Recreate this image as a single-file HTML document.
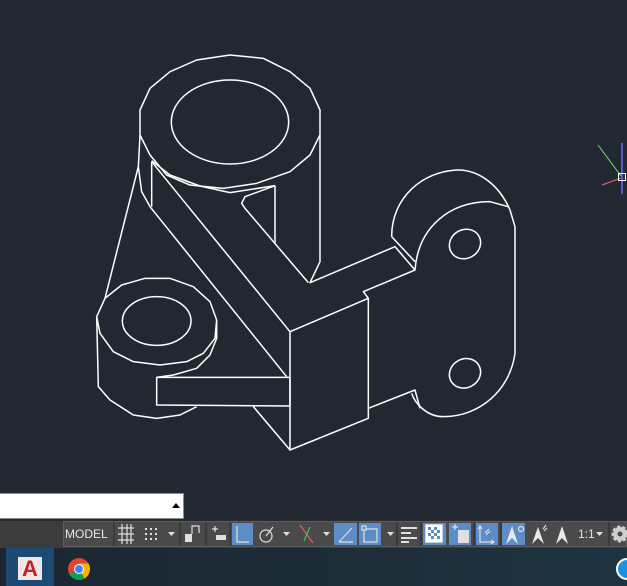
<!DOCTYPE html>
<html><head><meta charset="utf-8"><style>
*{margin:0;padding:0;box-sizing:border-box}
body{width:627px;height:586px;overflow:hidden;background:#222831;position:relative;font-family:"Liberation Sans",sans-serif}
.abs{position:absolute}
#cmd{left:0;top:493px;width:184px;height:26px;background:#fff;border:1px solid #8a8a8a;border-left:none}
#bar{left:0;top:520px;width:627px;height:28px;background:#3c3c3c;border-top:1px solid #2a2a2a}
#grp{left:63px;top:521px;width:564px;height:26px;background:#4a4a4a;border:1px solid #5c5c5c}
.b{position:absolute;top:523px;height:22px}
.bl{background:#5d8dc6}
.sep{position:absolute;top:522px;width:2px;height:24px;background:#3a3a3a}
#task{left:0;top:548px;width:627px;height:38px;background:linear-gradient(90deg,#1b2630,#1d2f3a 70%,#1e3440)}
</style></head><body>
<svg class="abs" style="left:0;top:0" width="627" height="520">
<g transform="translate(90 40) scale(0.33333)" fill="none" stroke="#fff" stroke-width="4.5" stroke-linejoin="round">
<path d="M150,285 L150,210 L180,145 L240,95 L320,60 L420,45 L520,55 L600,95 L660,145 L690,210 L690,285 L660,345 L600,395 L500,430 L400,445 L300,435 L230,405 L180,345 L150,285"/>
<ellipse cx="420" cy="246" rx="176" ry="126"/>
<path d="M185,362 L240,405 L330,438 L420,458 L555,437"/>
<path d="M150,285 L145,380 L45,775"/>
<path d="M145,380 L155,455 L180,500 L590,1010"/>
<path d="M185,365 L185,500"/>
<path d="M185,365 L600,875"/>
<path d="M555,437 L555,610"/>
<path d="M555,437 L465,470 L455,490 L465,505 L655,728"/>
<path d="M690,285 L690,665 L660,728 L915,620 L975,690 L820,755 L835,775"/>
<path d="M905,590 L975,665"/>
<path d="M600,875 L835,775 L835,1135 L600,1230 L600,875"/>
<path d="M490,1100 L600,1230"/>
<path d="M905,590 C905,470 1000,395 1100,390 C1170,388 1230,440 1260,510 L1275,560 L1275,940 C1260,1050 1170,1130 1060,1130 C1010,1130 975,1090 965,1060"/>
<path d="M975,690 C985,560 1080,485 1200,485 L1255,500"/>
<path d="M835,1105 L975,1050 L990,1105"/>
<ellipse cx="1125" cy="612" rx="48" ry="43" transform="rotate(-30 1125 612)"/>
<ellipse cx="1125" cy="1000" rx="48" ry="43" transform="rotate(-30 1125 1000)"/>
<path d="M20,830 L45,775 L95,735 L165,715 L240,715 L310,740 L360,785 L380,840 L375,895 L340,940 L290,965 L210,975 L130,965 L70,935 L30,880 L20,830 L25,1040 L60,1080 L130,1125 L200,1135 L270,1125 L320,1100"/>
<path d="M380,840 L380,895 L360,945 L320,985 L250,1005 L200,1012"/>
<ellipse cx="200" cy="843" rx="103" ry="73"/>
<path d="M200,1012 L600,1012 L600,1098 L200,1095 Z"/>
</g>
<line x1="598" y1="145" x2="621" y2="176" stroke="#7fe06a" stroke-width="1"/>
<line x1="602" y1="185" x2="621" y2="178" stroke="#e07070" stroke-width="1"/>
<line x1="622" y1="143" x2="622" y2="194" stroke="#6b6bff" stroke-width="1.5"/>
<rect x="618.5" y="173.5" width="7" height="7" fill="none" stroke="#fff"/>
</svg>
<div id="cmd" class="abs"><svg class="abs" style="left:172px;top:9px" width="8" height="6"><path d="M0,5 L4,0 L8,5Z" fill="#000"/></svg></div>
<div id="bar" class="abs"></div>
<div id="grp" class="abs"></div>
<div class="abs" style="left:65px;top:527px;font-size:12px;color:#e8e8e8">MODEL</div>
<div class="b bl" style="left:232px;width:21px"></div>
<div class="b bl" style="left:334px;width:23px"></div>
<div class="b bl" style="left:359px;width:22px"></div>
<div class="b bl" style="left:423px;width:23px"></div>
<div class="b bl" style="left:449px;width:22px"></div>
<div class="b bl" style="left:476px;width:22px"></div>
<div class="b bl" style="left:502px;width:23px"></div>
<div class="sep" style="left:113px"></div><div class="sep" style="left:179px"></div><div class="sep" style="left:205px"></div><div class="sep" style="left:229px"></div><div class="sep" style="left:396px"></div><div class="sep" style="left:420px"></div><div class="sep" style="left:473px"></div><div class="sep" style="left:500px"></div><div class="sep" style="left:608px"></div>
<svg class="abs" style="left:0;top:520px" width="627" height="28" fill="none" stroke="#e0e0e0" stroke-width="1.2">
<path d="M118,8 H134 M118,14 H134 M118,20 H134 M122,4 V24 M127,4 V24 M131,4 V24"/>
<g fill="#e0e0e0" stroke="none"><rect x="145" y="8" width="2" height="2"/><rect x="150" y="8" width="2" height="2"/><rect x="155" y="8" width="2" height="2"/><rect x="145" y="13" width="2" height="2"/><rect x="150" y="13" width="2" height="2"/><rect x="155" y="13" width="2" height="2"/><rect x="145" y="18" width="2" height="2"/><rect x="150" y="18" width="2" height="2"/><rect x="155" y="18" width="2" height="2"/>
<path d="M168,12 h7 l-3.5,4z M283,12 h7 l-3.5,4z M323,12 h7 l-3.5,4z M387,12 h7 l-3.5,4z M596,12 h7 l-3.5,4z"/>
<rect x="185" y="14" width="7" height="8"/><rect x="216" y="15" width="10" height="5"/>
<rect x="401" y="7" width="16" height="2"/><rect x="401" y="12" width="10" height="2"/><rect x="401" y="17" width="16" height="2"/><rect x="401" y="21" width="8" height="2"/>
<rect x="458" y="10" width="11" height="13"/>
</g>
<path d="M192,14 V6 H199 V13"/>
<path d="M212,9 H218 M215,6 V12"/>
<path d="M237,6 V22 H249"/>
<circle cx="266" cy="16" r="6"/><path d="M266,16 L273,7"/>
<path d="M300,5 L313,23" stroke="#e06060"/><path d="M304,21 L310,7" stroke="#50c050"/>
<path d="M339,22 L352,8 M339,22 H353"/>
<rect x="364" y="9" width="13" height="13"/><rect x="362" y="6" width="4" height="4" fill="#5d8dc6"/>
<rect x="426" y="5" width="16" height="17" fill="#fff" stroke="#fff"/>
<path d="M428,7h3v3h-3zM434,7h3v3h-3zM431,10h3v3h-3zM437,10h3v3h-3zM428,13h3v3h-3zM434,13h3v3h-3zM431,16h3v3h-3zM437,16h3v3h-3z" fill="#5d8dc6" stroke="none"/>
<path d="M452,7 H458 M455,4 V10"/>
<path d="M480,6 V22 H494 M478,9 L480,6 L482,9 M491,20 L494,22 L491,24 M485,13 L489,9 M486,15 L490,11"/>
<g fill="#e8e8e8" stroke="none">
<path d="M506,24 L512,6 L518,24 L512,18 Z"/>
<path d="M532,24 L538,7 L544,24 L538,18 Z"/>
<path d="M556,24 L562,6 L568,24 L562,18 Z"/>
</g>
<circle cx="521" cy="9" r="2.5"/>
<path d="M543,9 L546,5 M544,11 L547,8"/>
<circle cx="620" cy="14" r="7" fill="#cfcfcf" stroke="#cfcfcf" stroke-dasharray="3 2" stroke-width="3"/>
<circle cx="620" cy="14" r="2.5" fill="#4a4a4a" stroke="none"/>
</svg>
<div class="abs" style="left:578px;top:527px;font-size:12px;color:#e0e0e0">1:1</div>
<div id="task" class="abs"></div>
<div class="abs" style="left:6px;top:548px;width:48px;height:38px;background:#1c4a72"></div>
<div class="abs" style="left:18px;top:557px;width:24px;height:23px;background:#f2e6e6;color:#c8202a;font-weight:bold;font-size:22px;text-align:center;line-height:24px">A</div>
<svg class="abs" style="left:66px;top:557px" width="26" height="26"><circle cx="13" cy="12" r="11" fill="#db4437"/><path d="M13,12 L3.5,17.5 A11,11 0 0 0 18.5,21.5Z" fill="#0f9d58"/><path d="M13,12 L18.5,21.5 A11,11 0 0 0 22.5,6.5 L13,6.5Z" fill="#f4b400"/><circle cx="13" cy="12" r="5" fill="#fff"/><circle cx="13" cy="12" r="4" fill="#4285f4"/></svg>
<div class="abs" style="left:616px;top:558px;width:22px;height:22px;border-radius:50%;background:#1e90e0;border:2px solid #fff"></div>
</body></html>
